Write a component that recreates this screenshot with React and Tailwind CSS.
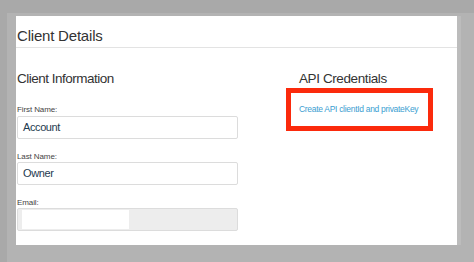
export default function App() {
  return (
    <div className="w-[474px] h-[262px] overflow-hidden bg-[#b3b3b3] border-t-[13px] border-l-[7px] border-[#a9a9a9] font-['Liberation_Sans',Arial,sans-serif]">
      <div className="pt-[3px] pl-[9px] flex">
        {/* Modal panel */}
        <div className="w-[441px] h-[229px] bg-white flex flex-col">
          {/* Header */}
          <div className="h-[32px] border-b border-[#e3e3e3] pt-[12px] pl-[1px]">
            <h1 className="text-[15px] leading-[15px] tracking-[-0.2px] text-[#333]">Client Details</h1>
          </div>
          <div className="flex pl-[1px] pt-[24px]">
            {/* Client Information */}
            <div className="w-[221px] flex flex-col">
              <h2 className="text-[13.5px] leading-[14px] tracking-[-0.5px] text-[#333]">Client Information</h2>
              <label className="mt-[19px] text-[8px] leading-[10px] tracking-[-0.1px] text-[#444]">First Name:</label>
              <div className="mt-[1px] h-[23px] border border-[#dcdcdc] rounded-[2px] flex items-center pl-[5px] text-[11px] tracking-[-0.4px] text-[#1e3a4f]">
                Account
              </div>
              <label className="mt-[13px] text-[8px] leading-[10px] tracking-[-0.1px] text-[#444]">Last Name:</label>
              <div className="h-[23px] border border-[#dcdcdc] rounded-[2px] flex items-center pl-[5px] text-[11px] tracking-[-0.4px] text-[#1e3a4f]">
                Owner
              </div>
              <label className="mt-[13px] text-[8px] leading-[10px] tracking-[-0.1px] text-[#444]">Email:</label>
              <div className="h-[23px] border border-[#dcdcdc] rounded-[2px] bg-[#ededed] flex items-center pl-[4px]">
                <div className="w-[107px] h-[19px] bg-white" />
              </div>
            </div>
            {/* API Credentials */}
            <div className="ml-[48px] flex flex-col">
              <h2 className="ml-[13px] text-[13.5px] leading-[14px] tracking-[-0.4px] text-[#333]">API Credentials</h2>
              <div className="mt-[2px] w-[147px] h-[43px] border-[5px] border-[#fb2a0c] flex items-center pl-[8px]">
                <a className="text-[8.5px] tracking-[-0.3px] text-[#3b9ed1]">Create API clientId and privateKey</a>
              </div>
            </div>
          </div>
        </div>
        {/* Overlay edge */}
        <div className="w-[4px] h-[229px] bg-[#bcbcbc]" />
      </div>
    </div>
  );
}
